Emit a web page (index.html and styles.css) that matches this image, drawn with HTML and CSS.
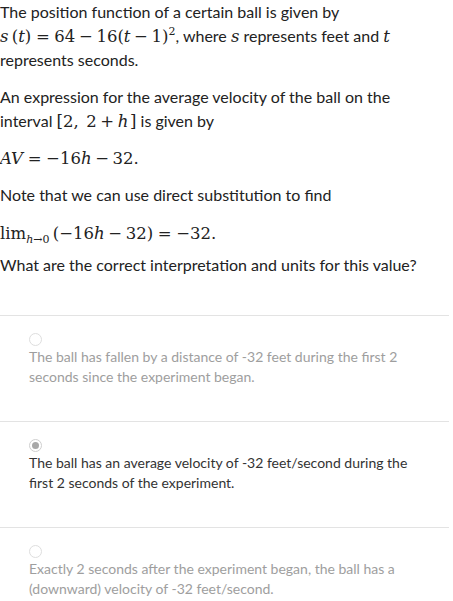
FILE: index.html
```html
<!DOCTYPE html>
<html>
<head>
<meta charset="utf-8">
<link rel="stylesheet" href="styles.css">
</head>
<body>
<div class="quiz">
  <div class="question">
    <p>The position function of a certain ball is given by <span class="m"><i>s</i>&#8201;(<i>t</i>)<span class="rel">=</span>64<span class="bin">−</span>16(<i>t</i><span class="bin">−</span>1)<sup>2</sup></span>, where <span class="m"><i>s</i></span> represents feet and <span class="m"><i>t</i></span> represents seconds.</p>
    <p>An expression for the average velocity of the ball on the interval <span class="m">[2,<span class="gap">2</span><span class="bin">+</span><i>h</i>&#8202;]</span> is given by</p>
    <p><span class="m"><i>AV</i><span class="rel">=</span>−16<i>h</i><span class="bin">−</span>32.</span></p>
    <p>Note that we can use direct substitution to find</p>
    <p class="limline"><span class="m">lim<sub><i>h</i>→0</sub>&#8201;(−16<i>h</i><span class="bin">−</span>32)<span class="rel">=</span>−32.</span></p>
    <p>What are the correct interpretation and units for this value?</p>
  </div>
  <div class="answers">
    <div class="answer muted">
      <span class="radio"></span>
      <div class="label">The ball has fallen by a distance of -32 feet during the first 2 seconds since the experiment began.</div>
    </div>
    <div class="answer">
      <span class="radio checked"></span>
      <div class="label">The ball has an average velocity of -32 feet/second during the first 2 seconds of the experiment.</div>
    </div>
    <div class="answer muted last">
      <span class="radio"></span>
      <div class="label">Exactly 2 seconds after the experiment began, the ball has a (downward) velocity of -32 feet/second.</div>
    </div>
  </div>
</div>
</body>
</html>
```
FILE: styles.css
```css
html, body {
  margin: 0;
  padding: 0;
  background: #ffffff;
}
body {
  font-family: Lato, "Open Sans", sans-serif;
  color: #222222;
}
.quiz {
  width: 449px;
}
.question {
  padding-right: 29px;
  font-size: 16px;
  line-height: 24px;
}
.question p {
  margin: 0 0 13px;
}
.question p.limline {
  padding-top: 1px;
  margin-bottom: 8px;
}
.m {
  font-family: "DejaVu Serif", "Liberation Serif", serif;
  font-size: 16.5px;
  white-space: nowrap;
  line-height: 1;
}
.m i {
  font-style: italic;
}
.m sup {
  font-size: 11px;
  vertical-align: 7px;
  line-height: 0;
}
.m sub {
  font-size: 11px;
  vertical-align: -4px;
  line-height: 0;
}
.rel {
  margin: 0 0.28em;
}
.bin {
  margin: 0 0.22em;
}
.gap {
  margin-left: 0.45em;
}
.answers {
  margin-top: 38px;
}
.answer {
  border-top: 1px solid #e3e3e3;
  padding: 17px 29px 34px;
  color: #333333;
  font-size: 14px;
  line-height: 20px;
}
.answer.last {
  padding-bottom: 0;
}
.answer.muted {
  color: #9e9e9e;
}
.radio {
  display: block;
  width: 11px;
  height: 11px;
  border: 1px solid #dedede;
  border-radius: 50%;
  margin-bottom: 1px;
  position: relative;
}
.radio.checked {
  border-color: #cfcfcf;
}
.radio.checked::after {
  content: "";
  position: absolute;
  left: 2px;
  top: 2px;
  width: 7px;
  height: 7px;
  border-radius: 50%;
  background: #a8a8a8;
}
```
